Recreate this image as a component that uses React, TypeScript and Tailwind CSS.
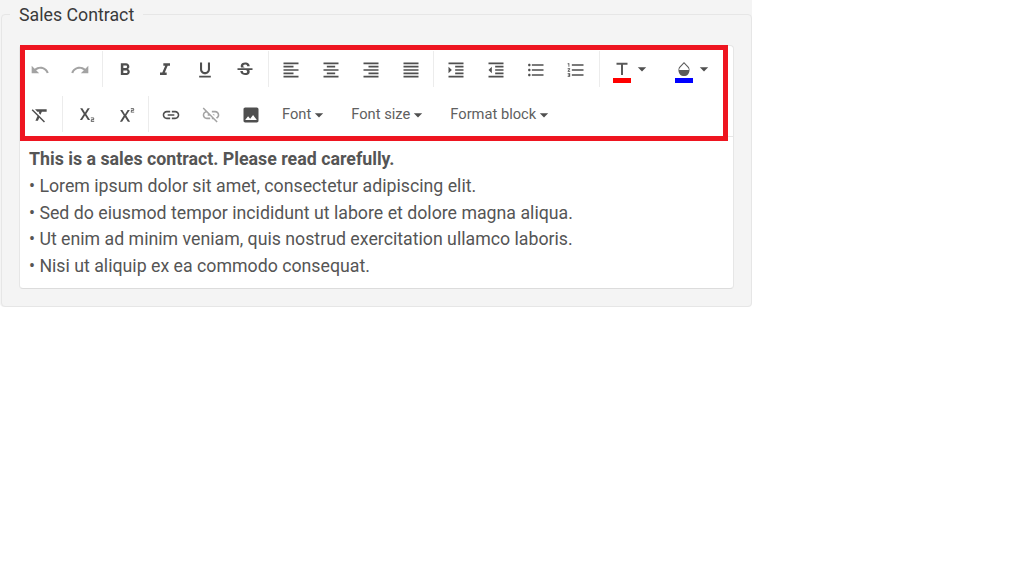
import React from "react";
import {
  MdUndo, MdRedo, MdFormatBold, MdFormatItalic, MdFormatUnderlined, MdStrikethroughS,
  MdFormatAlignLeft, MdFormatAlignCenter, MdFormatAlignRight, MdFormatAlignJustify,
  MdFormatIndentIncrease, MdFormatIndentDecrease, MdFormatListBulleted, MdFormatListNumbered,
  MdFormatClear, MdSubscript, MdSuperscript, MdLink, MdLinkOff, MdImage, MdArrowDropDown,
} from "react-icons/md";

type IconT = React.ComponentType<{ size?: number; className?: string }>;

function Btn({ icon: Icon, off, shift }: { icon: IconT; off?: boolean; shift?: boolean }) {
  return (
    <button className={`flex h-9 w-10 items-center justify-center pt-[1px] ${off ? "text-[#a3a3a3]" : "text-[#4f4f4f]"}`}>
      <Icon size={20} className={shift ? "-ml-[5px]" : ""} />
    </button>
  );
}

function Group({ children, className }: { children: React.ReactNode; className: string }) {
  return <div className={`flex h-9 items-center border-r border-[#ececec] ${className}`}>{children}</div>;
}

function ColorBtn({ children, bar }: { children: React.ReactNode; bar: string }) {
  return (
    <button className="flex h-9 w-[62px] items-start text-[#5a5a5a]">
      <span className="mt-[10px] flex w-[30px] shrink-0 flex-col items-center pl-[10px]">
        {children}
        <span className={`mt-[1px] h-[5px] w-[18px] ${bar}`} />
      </span>
      <MdArrowDropDown size={20} className="mt-[8px] text-[#4f4f4f]" />
    </button>
  );
}

function TextBtn({ label, className }: { label: string; className: string }) {
  return (
    <button className={`flex h-9 items-center pt-[1px] text-[14.7px] text-[#606060] ${className}`}>
      {label}
      <MdArrowDropDown size={20} className="-ml-[2px] -mr-[1px] text-[#4f4f4f]" />
    </button>
  );
}

const lines = [
  "• Lorem ipsum dolor sit amet, consectetur adipiscing elit.",
  "• Sed do eiusmod tempor incididunt ut labore et dolore magna aliqua.",
  "• Ut enim ad minim veniam, quis nostrud exercitation ullamco laboris.",
  "• Nisi ut aliquip ex ea commodo consequat.",
];

export default function App() {
  return (
    <div className="min-h-[576px] bg-white font-['Roboto',sans-serif]">
      <div className="h-[306.5px] w-[752px] rounded-b bg-[#f4f4f4] pl-[1px]">
        <fieldset className="h-full w-[750px] rounded border border-[#e6e6e6] px-[17px] pb-[17px] pt-0">
          <legend className="ml-[-9px] h-[28px] px-[9px] pt-[1px] text-[17.76px] leading-[28px] text-[#3a3a3a]">Sales Contract</legend>
          <div className="relative mt-[17px] h-[244px] w-[715px] rounded border border-[#e6e6e6] border-b-[#dcdcdc] bg-white">
            <div className="h-[91px] border-b border-[#e6e6e6] pt-[5px]">
              <div className="flex h-[45px] items-start">
                <Group className="w-[83px] pr-[2px]">
                  <Btn icon={MdUndo} off />
                  <Btn icon={MdRedo} off />
                </Group>
                <Group className="pl-[2px] pr-[3px]">
                  <Btn icon={MdFormatBold} />
                  <Btn icon={MdFormatItalic} />
                  <Btn icon={MdFormatUnderlined} />
                  <Btn icon={MdStrikethroughS} />
                </Group>
                <Group className="pl-[2px] pr-[2px]">
                  <Btn icon={MdFormatAlignLeft} />
                  <Btn icon={MdFormatAlignCenter} />
                  <Btn icon={MdFormatAlignRight} />
                  <Btn icon={MdFormatAlignJustify} />
                </Group>
                <Group className="pl-[2px] pr-[3px]">
                  <Btn icon={MdFormatIndentIncrease} />
                  <Btn icon={MdFormatIndentDecrease} />
                  <Btn icon={MdFormatListBulleted} />
                  <Btn icon={MdFormatListNumbered} />
                </Group>
                <div className="flex h-9 items-center pl-[2px]">
                  <ColorBtn bar="bg-[#ff0000]">
                    <svg width="16" height="16" viewBox="0 0 16 16" fill="currentColor">
                      <path d="M2.5 1.7h11v2H9V14H7V3.7H2.5z" />
                    </svg>
                  </ColorBtn>
                  <ColorBtn bar="bg-[#0000ff]">
                    <svg width="16" height="16" viewBox="0 0 16 16" fill="currentColor">
                      <path
                        fillRule="evenodd"
                        d="M8 1l4.3 4.4c2.5 2.6 1 8.2-2.2 9.3-1.4.4-2.8.4-4.2 0C2.7 13.6 1.2 8 3.7 5.4zM8 2.6L4.5 6.2C3.7 7 3.2 8 3.1 9h9.8c-.1-1-.6-2-1.4-2.8z"
                      />
                    </svg>
                  </ColorBtn>
                </div>
              </div>
              <div className="flex h-[45px] items-start">
                <Group className="w-[43px] pr-[2px]">
                  <Btn icon={MdFormatClear} />
                </Group>
                <Group className="w-[86px] pl-[4px]">
                  <Btn icon={MdSubscript} shift />
                  <Btn icon={MdSuperscript} shift />
                </Group>
                <div className="flex h-9 items-center pl-[2px]">
                  <Btn icon={MdLink} />
                  <Btn icon={MdLinkOff} off />
                  <Btn icon={MdImage} />
                  <TextBtn label="Font" className="ml-[11px]" />
                  <TextBtn label="Font size" className="ml-[23px]" />
                  <TextBtn label="Format block" className="ml-[23px]" />
                </div>
              </div>
            </div>
            <div className="px-[9px] pt-[9px] text-[17.8px] leading-[26.75px] text-[#555555]">
              <p className="font-bold">This is a sales contract. Please read carefully.</p>
              {lines.map((l) => (
                <p key={l} className="text-[17.74px]">{l}</p>
              ))}
            </div>
            <div className="pointer-events-none absolute left-0 top-[-1px] h-[96px] w-[708px] border-[5px] border-[#ee1520]" />
          </div>
        </fieldset>
      </div>
    </div>
  );
}
